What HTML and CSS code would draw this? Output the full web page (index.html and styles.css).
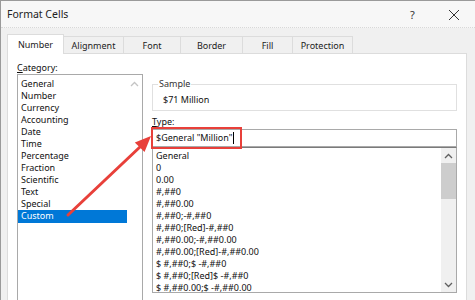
FILE: index.html
```html
<!DOCTYPE html>
<html>
<head>
<meta charset="utf-8">
<link rel="stylesheet" href="styles.css">
</head>
<body>
<div class="window">
  <div class="titlebar">
    <span class="title">Format Cells</span>
    <span class="help">?</span>
    <span class="close">
      <svg width="12" height="12" viewBox="0 0 12 12"><path d="M1 1 L11 11 M11 1 L1 11" stroke="#333" stroke-width="1" fill="none"/></svg>
    </span>
  </div>
  <div class="tabs">
    <div class="tab active">Number</div>
    <div class="tab t-align">Alignment</div>
    <div class="tab t-font">Font</div>
    <div class="tab t-border">Border</div>
    <div class="tab t-fill">Fill</div>
    <div class="tab t-prot">Protection</div>
  </div>
  <div class="panel">
    <div class="left">
      <div class="label"><u>C</u>ategory:</div>
      <div class="catlist">
        <div class="items">
          <div class="item">General</div>
          <div class="item">Number</div>
          <div class="item">Currency</div>
          <div class="item">Accounting</div>
          <div class="item">Date</div>
          <div class="item">Time</div>
          <div class="item">Percentage</div>
          <div class="item">Fraction</div>
          <div class="item">Scientific</div>
          <div class="item">Text</div>
          <div class="item">Special</div>
          <div class="item sel">Custom</div>
        </div>
        <div class="catscroll">
          <svg width="9" height="6" viewBox="0 0 9 6"><path d="M1 5 L4.5 1.5 L8 5" stroke="#c4c4c4" stroke-width="1.3" fill="none"/></svg>
        </div>
      </div>
    </div>
    <div class="right">
      <fieldset class="sample">
        <legend>Sample</legend>
        <div class="sampletext">$71 Million</div>
      </fieldset>
      <div class="label typelabel"><u>T</u>ype:</div>
      <div class="typeinput">$General "Million"<span class="caret"></span></div>
      <div class="typelist">
        <div class="items">
          <div class="item">General</div>
          <div class="item">0</div>
          <div class="item">0.00</div>
          <div class="item">#,##0</div>
          <div class="item">#,##0.00</div>
          <div class="item">#,##0;-#,##0</div>
          <div class="item">#,##0;[Red]-#,##0</div>
          <div class="item">#,##0.00;-#,##0.00</div>
          <div class="item">#,##0.00;[Red]-#,##0.00</div>
          <div class="item">$ #,##0;$ -#,##0</div>
          <div class="item">$ #,##0;[Red]$ -#,##0</div>
          <div class="item">$ #,##0.00;$ -#,##0.00</div>
        </div>
        <div class="scroll">
          <svg class="arr" width="9" height="6" viewBox="0 0 9 6"><path d="M1 5 L4.5 1.5 L8 5" stroke="#606060" stroke-width="1.3" fill="none"/></svg>
          <div class="thumb"></div>
          <div class="spacer"></div>
          <svg class="arr" width="9" height="6" viewBox="0 0 9 6"><path d="M1 1 L4.5 4.5 L8 1" stroke="#606060" stroke-width="1.3" fill="none"/></svg>
        </div>
      </div>
    </div>
  </div>
  <div class="redbox"></div>
  <svg class="arrow" width="475" height="300" viewBox="0 0 475 300">
    <line x1="68" y1="215" x2="141" y2="146" stroke="#e8403a" stroke-width="3" stroke-linecap="round"/>
    <polygon points="151,136 144.5,152 134.8,142.5" fill="#e8403a"/>
  </svg>
</div>
</body>
</html>
```
FILE: styles.css
```css
html, body {
  margin: 0;
  padding: 0;
}
body {
  width: 475px;
  height: 300px;
  overflow: hidden;
  font-family: "Noto Sans", "Open Sans", sans-serif;
  font-size: 9px;
  color: #111;
  background: #f0f0f0;
}
.window {
  position: relative;
  width: 474px;
  height: 299px;
  border-top: 1px solid #9a9a9a;
  border-left: 1px solid #9a9a9a;
  background: #f0f0f0;
  overflow: hidden;
}
.titlebar {
  height: 26px;
  background: #f7f7f7;
  border-bottom: 1px dotted #d8d8d8;
  display: flex;
  align-items: center;
  padding-left: 6px;
}
.title {
  font-size: 10.5px;
  color: #222;
  flex: 1;
}
.help {
  font-size: 11px;
  color: #333;
  width: 38px;
}
.close {
  width: 27px;
  display: flex;
  align-items: center;
  padding-top: 1px;
}
.tabs {
  display: flex;
  margin-left: 6px;
  margin-top: 5px;
  height: 20px;
  align-items: flex-end;
}
.tab {
  height: 17px;
  line-height: 17px;
  border: 1px solid #dcdcdc;
  border-bottom: none;
  border-left: none;
  text-align: center;
  background: #f0f0f0;
  color: #222;
  box-sizing: border-box;
}
.tab.active {
  height: 20px;
  line-height: 20px;
  width: 57px;
  background: #fff;
  border-left: 1px solid #dcdcdc;
  position: relative;
  top: 1px;
}
.t-align { width: 60px; }
.t-font { width: 57px; }
.t-border { width: 62px; }
.t-fill { width: 50px; }
.t-prot { width: 60px; }
.panel {
  margin-left: 6px;
  width: 458px;
  height: 260px;
  background: #fff;
  border: 1px solid #dcdcdc;
  border-bottom: none;
  display: flex;
}
.left {
  width: 135px;
  box-sizing: border-box;
  padding-left: 9px;
  padding-top: 7px;
}
.label {
  height: 13px;
  line-height: 13px;
}
.catlist {
  width: 126px;
  height: 240px;
  box-sizing: border-box;
  border: 1px solid #a9a9a9;
  display: flex;
}
.catlist .items {
  width: 109px;
  padding-top: 3px;
}
.item {
  height: 12px;
  line-height: 12px;
  padding-left: 3px;
  white-space: nowrap;
}
.item.sel {
  background: #0078d7;
  color: #fff;
  height: 13px;
}
.catscroll {
  flex: 1;
  display: flex;
  justify-content: center;
  padding-top: 6px;
}
.right {
  width: 305px;
  padding-left: 9px;
  padding-top: 29px;
  display: flex;
  flex-direction: column;
}
.sample {
  margin: 0;
  padding: 0 0 0 10px;
  width: 305px;
  box-sizing: border-box;
  border: 1px solid #e0e0e0;
  height: 32px;
  margin-top: -4px;
}
.sample legend {
  padding: 0 1px;
  margin-left: -5px;
  color: #333;
  line-height: 10px;
}
.sampletext {
  padding-top: 5px;
  line-height: 12px;
}
.typelabel {
  margin-top: 4px;
}
.typeinput {
  margin-top: 1px;
  height: 18px;
  width: 305px;
  box-sizing: border-box;
  border: 1px solid #a9a9a9;
  line-height: 16px;
  padding-left: 3px;
  display: flex;
  align-items: center;
}
.caret {
  width: 1px;
  height: 12px;
  background: #000;
  margin-left: 1px;
}
.typelist {
  width: 305px;
  height: 146px;
  box-sizing: border-box;
  border: 1px solid #a9a9a9;
  border-top: 1px solid #7a7a7a;
  display: flex;
}
.typelist .items {
  flex: 1;
  padding-top: 2px;
}
.scroll {
  width: 15px;
  background: #f0f0f0;
  display: flex;
  flex-direction: column;
  align-items: center;
}
.scroll .arr {
  margin: 5px 0 4px;
}
.thumb {
  width: 15px;
  height: 36px;
  background: #cdcdcd;
}
.spacer {
  flex: 1;
}
.redbox {
  position: absolute;
  left: 150px;
  top: 126px;
  width: 87px;
  height: 18px;
  border: 2px solid #e8403a;
}
.arrow {
  position: absolute;
  left: -1px;
  top: -1px;
}
```
